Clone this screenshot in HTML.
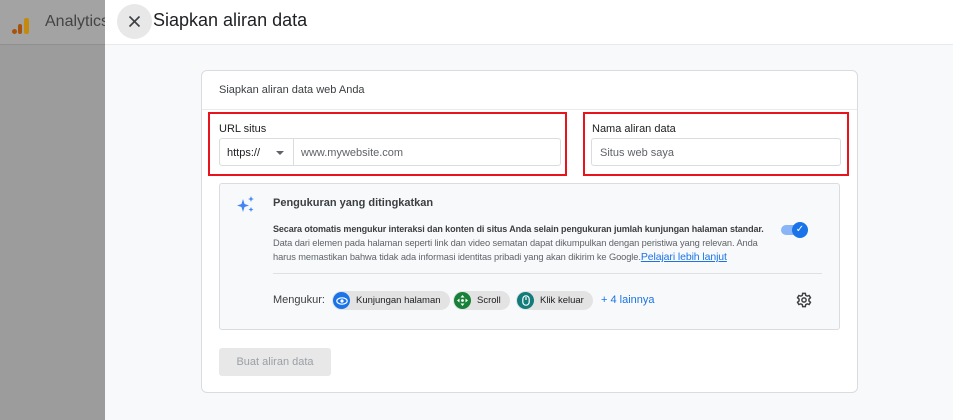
<!DOCTYPE html>
<html><head><meta charset="utf-8"><style>
*{box-sizing:border-box;margin:0;padding:0}
body{width:953px;height:420px;overflow:hidden;font-family:"Liberation Sans",Roboto,sans-serif;background:#f8f9fa;position:relative;color:#202124}
.abs{position:absolute}
.left{left:0;top:0;width:105px;height:420px;background:#9c9c9c}
.lefttop{left:0;top:0;width:105px;height:45px;background:#a3a3a3;border-bottom:1px solid #8f8f8f}
.hdr{left:105px;top:0;width:848px;height:45px;background:#fff;border-bottom:1px solid #e8eaed}
.card{left:201px;top:70px;width:657px;height:323px;background:#fff;border:1px solid #dadce0;border-radius:6px}
.red{border:2px solid #e8141c}
.inp{border:1px solid #dadce0;border-radius:3px;background:#fff;font-size:11px;color:#5f6368}
.t11{font-size:11px}
.chip{height:19px;border-radius:10px;background:#e3e3e3;font-size:9.5px;display:flex;align-items:center;padding-right:9px;top:291px}
.ci{width:17px;height:17px;border-radius:50%;margin:0 6px 0 1px;display:flex;align-items:center;justify-content:center}
.txt p{white-space:nowrap}
</style></head><body>
<div class="abs left"></div><div class="abs lefttop"></div>
<div class="abs" style="left:12px;top:18px;width:20px;height:16px">
<div class="abs" style="left:0;top:11px;width:5px;height:5px;border-radius:50%;background:#a6530b"></div>
<div class="abs" style="left:6px;top:6px;width:4px;height:10px;border-radius:2px;background:#a6530b"></div>
<div class="abs" style="left:12px;top:0;width:5px;height:16px;border-radius:2px;background:#c48a10"></div></div>
<div class="abs" style="left:45px;top:13px;font-size:16px;color:#444">Analytics</div>
<div class="abs hdr"></div>
<div class="abs" style="left:117px;top:4px;width:35px;height:35px;border-radius:50%;background:#e8e8e8"></div>
<svg class="abs" style="left:128px;top:15px" width="13" height="13" viewBox="0 0 13 13"><path d="M1.5 1.5L11.5 11.5M11.5 1.5L1.5 11.5" stroke="#3c4043" stroke-width="1.6"/></svg>
<div class="abs" style="left:153px;top:10px;font-size:18px;color:#202124">Siapkan aliran data</div>
<div class="abs card"></div>
<div class="abs t11" style="left:219px;top:84px;color:#3c4043">Siapkan aliran data web Anda</div>
<div class="abs" style="left:202px;top:109px;width:655px;height:1px;background:#e8eaed"></div>
<div class="abs red" style="left:208px;top:112px;width:359px;height:64px"></div>
<div class="abs red" style="left:583px;top:112px;width:266px;height:64px"></div>
<div class="abs t11" style="left:219px;top:123px">URL situs</div>
<div class="abs t11" style="left:592px;top:123px">Nama aliran data</div>
<div class="abs inp" style="left:219px;top:138px;width:342px;height:28px"></div>
<div class="abs" style="left:293px;top:139px;width:1px;height:26px;background:#dadce0"></div>
<div class="abs t11" style="left:227px;top:147px;color:#202124">https://</div>
<div class="abs" style="left:276px;top:151px;border:4px solid transparent;border-top:4px solid #5f6368"></div>
<div class="abs t11" style="left:301px;top:147px;color:#5f6368">www.mywebsite.com</div>
<div class="abs inp" style="left:591px;top:138px;width:250px;height:28px"></div>
<div class="abs t11" style="left:600px;top:147px;color:#5f6368">Situs web saya</div>
<div class="abs" style="left:219px;top:183px;width:621px;height:147px;background:#f8f9fa;border:1px solid #dadce0;border-radius:3px"></div>
<svg class="abs" style="left:236px;top:196px" width="20" height="18" viewBox="0 0 20 18"><path fill="#4285f4" d="M7 3 L8.5 8 L13 9.5 L8.5 11 L7 16 L5.5 11 L1 9.5 L5.5 8Z M15 0 L15.8 2.2 L18 3 L15.8 3.8 L15 6 L14.2 3.8 L12 3 L14.2 2.2Z M15 11 L15.7 12.8 L17.5 13.5 L15.7 14.2 L15 16 L14.3 14.2 L12.5 13.5 L14.3 12.8Z"/></svg>
<div class="abs t11" style="left:273px;top:197px;font-weight:bold;color:#3c4043">Pengukuran yang ditingkatkan</div>
<div class="abs txt" style="left:273px;top:222px;font-size:9.3px;line-height:14px;color:#5f6368;letter-spacing:-0.1px">
<p style="color:#3c4043;font-weight:bold;font-size:9px">Secara otomatis mengukur interaksi dan konten di situs Anda selain pengukuran jumlah kunjungan halaman standar.</p><p>Data dari elemen pada halaman seperti link dan video sematan dapat dikumpulkan dengan peristiwa yang relevan. Anda</p><p>harus memastikan bahwa tidak ada informasi identitas pribadi yang akan dikirim ke Google.<span style="color:#1a73e8;text-decoration:underline;font-size:10.5px">Pelajari lebih lanjut</span></p></div>
<div class="abs" style="left:781px;top:225px;width:24px;height:10px;border-radius:5px;background:#8ab4f8"></div>
<div class="abs" style="left:792px;top:222px;width:16px;height:16px;border-radius:50%;background:#1a73e8;color:#fff;font-size:10px;text-align:center;line-height:16px">✓</div>
<div class="abs" style="left:273px;top:273px;width:549px;height:1px;background:#e0e0e0"></div>
<div class="abs" style="left:273px;top:294px;font-size:11px;color:#3c4043">Mengukur:</div>
<div class="abs chip" style="left:332px"><div class="ci" style="background:#1a73e8"><svg width="12" height="8" viewBox="0 0 12 8"><ellipse cx="6" cy="4" rx="5.2" ry="3.2" fill="none" stroke="#fff" stroke-width="1.2"/><circle cx="6" cy="4" r="1.6" fill="#fff"/></svg></div>Kunjungan halaman</div>
<div class="abs chip" style="left:453px"><div class="ci" style="background:#188038"><svg width="11" height="11" viewBox="0 0 11 11"><path fill="#fff" d="M5.5 0L7.5 2.5H3.5ZM5.5 11L3.5 8.5H7.5ZM0 5.5L2.5 3.5V7.5ZM11 5.5L8.5 7.5V3.5Z"/><circle cx="5.5" cy="5.5" r="1.4" fill="#fff"/></svg></div>Scroll</div>
<div class="abs chip" style="left:516px"><div class="ci" style="background:#137c7a"><svg width="8" height="11" viewBox="0 0 8 11"><rect x="0.8" y="0.8" width="6.4" height="9.4" rx="3.2" fill="none" stroke="#fff" stroke-width="1.2"/><path d="M4 2v3" stroke="#fff" stroke-width="1.2"/></svg></div>Klik keluar</div>
<div class="abs" style="left:601px;top:294px;font-size:11px;color:#1a73e8">+ 4 lainnya</div>
<svg class="abs" style="left:796px;top:292px" width="16" height="16" viewBox="0 0 24 24"><path fill="none" stroke="#3c4043" stroke-width="2.2" d="M10 2h4l.6 3 2.2 1.2 2.9-1 2 3.4-2.3 2v2.8l2.3 2-2 3.4-2.9-1-2.2 1.2-.6 3h-4l-.6-3-2.2-1.2-2.9 1-2-3.4 2.3-2V10.6l-2.3-2 2-3.4 2.9 1L9.4 5z"/><circle cx="12" cy="12" r="3.2" fill="none" stroke="#3c4043" stroke-width="2.2"/></svg>
<div class="abs" style="left:219px;top:348px;width:112px;height:28px;border-radius:3px;background:#e8e8e8;color:#9aa0a6;font-size:11px;text-align:center;line-height:28px">Buat aliran data</div>
</body></html>
